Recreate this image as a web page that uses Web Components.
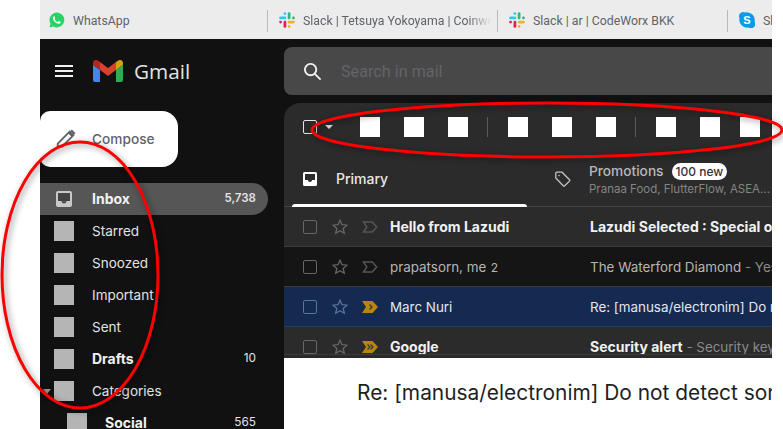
<!DOCTYPE html>
<html><head><meta charset="utf-8"><title>Gmail</title>
<style>
html,body{margin:0;padding:0;background:#fff;height:429px;overflow:hidden}
body{font-family:Inter,"Liberation Sans",sans-serif}
</style></head><body>
<app-shell>
  <tab-bar>
    <browser-tab pad="9" w="228" icon="whatsapp">WhatsApp</browser-tab>
    <browser-tab pad="11" w="230" icon="slack" fade>Slack | Tetsuya Yokoyama | Coinweb</browser-tab>
    <browser-tab pad="11" w="230" icon="slack">Slack | ar | CodeWorx BKK</browser-tab>
    <browser-tab pad="11" w="230" icon="skype">Skype</browser-tab>
  </tab-bar>
  <gmail-view>
    <gmail-sidebar slot="side">
      <nav-item active bold count="5,738" icon="inbox">Inbox</nav-item>
      <nav-item>Starred</nav-item>
      <nav-item>Snoozed</nav-item>
      <nav-item>Important</nav-item>
      <nav-item>Sent</nav-item>
      <nav-item bold count="10">Drafts</nav-item>
      <nav-item caret>Categories</nav-item>
      <nav-item sub bold count="565">Social</nav-item>
    </gmail-sidebar>
    <search-bar slot="search"></search-bar>
    <mail-panel slot="panel">
      <mail-row tone="read" bold name="Hello from Lazudi" subject="Lazudi Selected : Special offer"></mail-row>
      <mail-row tone="dark" name="prapatsorn, me" n="2" subject="The Waterford Diamond" snippet=" - Yes"></mail-row>
      <mail-row tone="blue" imp="1" name="Marc Nuri" subject="Re: [manusa/electronim] Do not detect sor"></mail-row>
      <mail-row tone="read" imp="2" bold name="Google" subject="Security alert" snippet=" - Security key"></mail-row>
    </mail-panel>
    <reading-pane slot="pane">Re: [manusa/electronim] Do not detect sorting</reading-pane>
  </gmail-view>
  <red-marks></red-marks>
</app-shell>
<script>
const def=(n,html)=>{customElements.define(n,class extends HTMLElement{
  connectedCallback(){ if(this.shadowRoot) return; const s=this.attachShadow({mode:'open'}); s.innerHTML=typeof html==='function'?html(this):html; }
});};
const ICONS={
 whatsapp:`<svg width="16" height="16" viewBox="0 0 16 16"><path d="M.4 15.6l1.1-3.900A7.400 7.400 0 1 1 4.400 14.500z" fill="#25d366"/><path d="M5.600 4.100c-.3 0-.7.100-1 .5-.4.500-.8 1.100-.7 2 .2 1.200 1 2.500 2.100 3.500 1.100 1 2.300 1.600 3.500 1.700 1 0 1.700-.5 2-1.100.2-.4.200-.8.100-.9l-1.700-.8c-.2-.1-.3 0-.4.100l-.7.8c-.1.100-.2.100-.4 0-.6-.3-1.200-.6-1.700-1.100-.5-.5-.8-1-1.100-1.500-.1-.2 0-.3.100-.4l.5-.6c.1-.2.100-.3 0-.4l-.7-1.700c-.1-.1-.2-.1-.3-.1z" fill="#fff"/></svg>`,
 slack:`<svg width="16" height="16" viewBox="0 0 16 16"><g fill="none" stroke-linecap="round" stroke-width="2.700"><path d="M1.500 5.900h4.500" stroke="#36c5f0"/><path d="M5.900 1.500v.1" stroke="#36c5f0"/><path d="M10.100 1.500V6" stroke="#2eb67d"/><path d="M14.500 5.900h-.1" stroke="#2eb67d"/><path d="M14.500 10.100H10" stroke="#ecb22e"/><path d="M10.100 14.500v-.1" stroke="#ecb22e"/><path d="M5.900 14.500V10" stroke="#e01e5a"/><path d="M1.500 10.100h.1" stroke="#e01e5a"/></g></svg>`,
 skype:`<svg width="16" height="16" viewBox="0 0 16 16"><path d="M4.300 0A4.300 4.300 0 0 0 .5 6.300 7.800 7.800 0 0 0 9.600 15.500 4.300 4.300 0 0 0 15.600 9.600 7.800 7.800 0 0 0 6.300.5 4.300 4.300 0 0 0 4.300 0z" fill="#0a9ce6"/><text x="8" y="12" text-anchor="middle" font-family="Liberation Sans" font-weight="700" font-size="11" fill="#fff">S</text></svg>`
};
def('app-shell',`<style>:host{display:block;position:relative;width:783px;height:429px;overflow:hidden;background:#fff}
.col{margin-left:40px;width:732px;height:429px;display:flex;flex-direction:column;overflow:hidden}
</style><div class="col"><slot></slot></div><slot name="over"></slot>`);
def('tab-bar',`<style>:host{display:flex;flex:none;height:39px;background:#ececec;overflow:hidden}</style><slot></slot>`);
def('browser-tab',h=>{const fade=h.hasAttribute('fade');return `<style>
:host{display:flex;flex:none;align-items:center;box-sizing:border-box;width:${h.getAttribute('w')}px;padding-left:${h.getAttribute('pad')}px;height:39px;position:relative;font:12.300px Roboto,sans-serif;color:#5f6368}
.i{flex:none;width:16px;height:16px;margin-right:8px;display:block}
.t{white-space:nowrap;overflow:hidden;padding-top:2px;width:${fade?188:190}px;${fade?'-webkit-mask-image:linear-gradient(90deg,#000 88%,transparent 100%);mask-image:linear-gradient(90deg,#000 88%,transparent 100%);':''}}
.d{position:absolute;right:0;top:10px;width:1px;height:22px;background:#b9b9b9}
:host(:last-child) .d{display:none}
</style><span class="i">${ICONS[h.getAttribute('icon')]}</span><span class="t"><slot></slot></span><span class="d"></span>`});
def('gmail-view',`<style>:host{flex:1;display:grid;grid-template-columns:244px 488px;grid-template-rows:8px 48px 8px 255px 1fr;background:#111;min-height:0}
.s{grid-column:1;grid-row:1/6;min-height:0;overflow:hidden}
.a{grid-column:2;grid-row:2;display:block}.b{grid-column:2;grid-row:4;display:block;min-height:0}
.c{grid-column:2;grid-row:5;display:block;min-height:0;overflow:hidden}
</style><div class="s"><slot name="side"></slot></div><div class="a"><slot name="search"></slot></div><div class="b"><slot name="panel"></slot></div><div class="c"><slot name="pane"></slot></div>`);
def('gmail-sidebar',`<style>:host{display:block;height:100%;color:#e8eaed}
.top{display:flex;align-items:center;height:64px;padding-left:15px;box-sizing:border-box}
.word{font:400 20.700px "Open Sans",sans-serif;color:#e3e3e3;margin-left:11px}
.compose{display:flex;align-items:center;box-sizing:border-box;width:138px;height:56px;margin-top:8px;background:#fff;border-radius:10px 16px 16px 10px;padding-left:15px;color:#5f6368;font:500 13.700px Inter,sans-serif}
.compose svg{margin-right:15px;flex:none}
.list{margin-top:16px;display:flex;flex-direction:column}
</style>
<div class="top"><svg width="18" height="12" viewBox="0 0 18 12" fill="#f1f1f1" style="margin-right:20px"><rect y="0" width="18" height="2"/><rect y="5" width="18" height="2"/><rect y="10" width="18" height="2"/></svg>
<svg width="30" height="22" viewBox="0 0 30 22"><path d="M2 22h5V10L0 4.700V20a2 2 0 0 0 2 2z" fill="#4285f4"/><path d="M23 22h5a2 2 0 0 0 2-2V4.700L23 10z" fill="#34a853"/><path d="M23 2v8l7-5.300V3c0-2.700-3-3.900-5-2.300z" fill="#d4a40f"/><path d="M7 10V2l8 6 8-6v8l-8 6z" fill="#d8412f"/><path d="M0 3v1.700L7 10V2L5 .7C3-.9 0 .3 0 3z" fill="#b5271f"/></svg>
<span class="word">Gmail</span></div>
<div class="compose"><svg width="22" height="22" viewBox="0 0 24 24" fill="none" stroke="#5f6368" stroke-width="2"><path d="M3 21v-4L16 4l4 4L7 21M15 5l4 4"/><path d="M17.500 2.500l4 4" stroke-width="2.500"/></svg><span>Compose</span></div>
<div class="list"><slot></slot></div>`);
def('nav-item',h=>{const sub=h.hasAttribute('sub'),b=h.hasAttribute('bold'),act=h.hasAttribute('active'),c=h.getAttribute('count');
 const ic=h.getAttribute('icon')==='inbox'?`<svg class="i" style="left:16px;top:8px;width:16px;height:16px;background:none" viewBox="0 0 16 16"><path d="M2 0h12a2 2 0 0 1 2 2v12a2 2 0 0 1-2 2H2a2 2 0 0 1-2-2V2a2 2 0 0 1 2-2zm0 2v8h3.500a2.500 2.500 0 0 0 5 0H14V2z" fill="#c9c9c9" fill-rule="evenodd"/><rect x="2" y="2" width="12" height="8" fill="#444"/></svg>`:`<span class="i"></span>`;
 return `<style>:host{display:flex;align-items:center;position:relative;height:32px;width:228px;box-sizing:border-box;padding-left:${sub?65:52}px;padding-right:12px;border-radius:0 16px 16px 0;font:${b?700:400} ${b?14:13.500}px Inter,sans-serif;color:${b?'#f1f1f1':'#e3e3e3'};${act?'background:#565656;':''}}
.i{position:absolute;left:${sub?27:14}px;top:6px;width:20px;height:20px;background:#b5b5b5;display:block}
.l{padding-bottom:${b?2:0}px}
.c{margin-left:auto;padding-bottom:2px;font:${act?600:400} ${act?11.500:11.800}px Inter,sans-serif;color:#e3e3e3}
.car{position:absolute;left:3px;top:14px;border:4px solid transparent;border-top:5px solid #999;border-bottom:0}
</style>${ic}${h.hasAttribute('caret')?'<span class="car"></span>':''}<span class="l"><slot></slot></span>${c?`<span class="c">${c}</span>`:''}`});
def('search-bar',`<style>:host{display:flex;align-items:center;height:48px;background:#484848;border-radius:8px 0 0 8px;color:#626468;font:400 16.200px Roboto,sans-serif}
svg{margin:0 19px 0 19px}</style><svg width="19" height="19" viewBox="0 0 20 20" fill="none" stroke="#f1f1f1" stroke-width="2"><circle cx="8" cy="8" r="6"/><path d="M12.500 12.500l6 6"/></svg><span>Search in mail</span>`);
def('mail-panel',`<style>:host{display:flex;flex-direction:column;height:255px;background:#2b2b2b;border-radius:16px 0 0 0;overflow:hidden;color:#e8eaed}
.bar{display:flex;align-items:center;flex:none;height:54px;padding:0 0 6px 19px;box-sizing:border-box}
.cb{width:14px;height:14px;border:1.500px solid #e3e3e3;border-radius:2px;box-sizing:border-box;flex:none}
.cr{width:0;height:0;border-style:solid;border-width:4px 4px 0 4px;border-color:#e3e3e3 transparent transparent;margin:0 27px 0 8px;flex:none}
.sq{width:20px;height:20px;background:#fff;flex:none;margin-right:24px}
.sq.e{margin-right:19px}
.sq.n{margin-right:20px}
.dv{width:1px;height:20px;background:#5a5a5a;flex:none;margin-right:20px}
.tabs{display:flex;flex:none;height:49px;border-bottom:1px solid #444;position:relative}
.p{flex:none;width:243px;display:flex;align-items:center;box-sizing:border-box;padding:0 0 5px 19px;position:relative;font:500 14px Inter,sans-serif;color:#e8e8e8}
.p svg{margin-right:19px}
.p span{padding-bottom:2px}
.p:after{content:"";position:absolute;left:8px;width:235px;bottom:-1px;height:3px;background:#fff;border-radius:3px 3px 0 0}
.q{flex:none;display:flex;align-items:center;padding:0 0 5px 28px;position:relative}
.q svg{margin-right:18px;flex:none}
.l1{display:flex;align-items:center;font:500 13.700px Inter,sans-serif;color:#b9b9b9;height:18px}
.pill{background:#fff;color:#333;font:500 12px Inter,sans-serif;border-radius:9px;height:17px;line-height:17px;padding:0 4px;margin-left:8px}
.l2{font:400 11.500px Inter,sans-serif;color:#858585;white-space:nowrap;margin-top:2px}
.rows{flex:none;height:147px;overflow:hidden}
.foot{flex:1;border-top:1px solid #3c3c3c;background:#2a2a2a}
</style>
<div class="bar"><span class="cb"></span><span class="cr"></span><span class="sq"></span><span class="sq"></span><span class="sq e"></span><span class="dv"></span><span class="sq"></span><span class="sq"></span><span class="sq e"></span><span class="dv"></span><span class="sq"></span><span class="sq n"></span><span class="sq"></span></div>
<div class="tabs"><div class="p"><svg width="14" height="14" viewBox="0 0 14 14"><path d="M1.500 0h11A1.500 1.500 0 0 1 14 1.500v11a1.500 1.500 0 0 1-1.500 1.500h-11A1.500 1.500 0 0 1 0 12.500v-11A1.500 1.500 0 0 1 1.500 0zM2 2v6h3a2 2 0 0 0 4 0h3V2z" fill="#fff" fill-rule="evenodd"/></svg><span>Primary</span></div>
<div class="q"><svg width="16" height="16" viewBox="0 0 16 16" fill="none" stroke="#c4c4c4" stroke-width="1.300"><path d="M.8 2.300V7l7.400 7.800a1 1 0 0 0 1.400 0l4.900-4.700a1 1 0 0 0 0-1.400L7 1.200H1.900a1 1 0 0 0-1.100 1.100z"/><circle cx="4" cy="4.500" r=".8" fill="#c4c4c4" stroke="none"/></svg><div><div class="l1">Promotions<span class="pill">100 new</span></div><div class="l2">Pranaa Food, FlutterFlow, ASEA...</div></div></div></div>
<div class="rows"><slot></slot></div><div class="foot"></div>`);
def('mail-row',h=>{const tone=h.getAttribute('tone'),imp=h.getAttribute('imp'),b=h.hasAttribute('bold'),g=k=>h.getAttribute(k)||'';
 const bg={read:'#2b2b2b',dark:'#151515',blue:'#142a50'}[tone];
 const sc=tone==='blue'?'#5a7399':'#666';
 const impi=imp?`<svg width="16" height="12" viewBox="0 0 16 12"><path d="M0 0h10.500L16 6l-5.500 6H0l4-6z" fill="#b8860f"/>${imp==='1'?'<path d="M7.500 3.500L10 6l-2.500 2.500" fill="none" stroke="#333" stroke-width="1.200"/>':'<path d="M5.500 3.500L8 6l-2.500 2.500M8.500 3.500L11 6l-2.500 2.500" fill="none" stroke="#333" stroke-width="1.200"/>'}</svg>`:`<svg width="16" height="12" viewBox="0 0 16 12"><path d="M1.500 1h8.700L14.800 6l-4.600 5H1.500L4.800 6z" fill="none" stroke="#555" stroke-width="1.500"/></svg>`;
 return `<style>:host{display:flex;align-items:center;height:40px;box-sizing:border-box;background:${bg};border-bottom:1px solid ${tone==='blue'?'#2a3d5e':'#3c3c3c'};padding-left:19px;white-space:nowrap;font:${b?700:400} ${b?14:13.400}px Inter,sans-serif;color:${b?'#f1f1f1':(tone==='blue'?'#e3e8f0':'#b5b5b5')};flex:none;overflow:hidden}
.cb{width:14px;height:14px;border:1.500px solid ${sc};border-radius:2px;box-sizing:border-box;flex:none;margin-right:15px}
.st{flex:none;margin-right:14px;display:block}.im{flex:none;margin-right:12px;display:flex}
.nm{width:200px;flex:none}.n{font-size:12px;font-weight:400;margin-left:1px}
.sub{flex:none}.sub b{font-weight:${b?700:400}}.sn{color:#8a8a8a;font-weight:400;font-size:13.400px}
</style><span class="cb"></span><svg class="st" width="16" height="16" viewBox="0 0 16 16"><path d="M8 1.200l2 4.500 4.900.5-3.700 3.300 1.100 4.800L8 11.800l-4.300 2.500 1.100-4.800L1.100 6.200 6 5.700z" fill="none" stroke="${sc}" stroke-width="1.300"/></svg><span class="im">${impi}</span><span class="nm">${g('name')}${g('n')?`<span class="n"> ${g('n')}</span>`:''}</span><span class="sub"><b>${g('subject')}</b><span class="sn">${g('snippet')}</span></span>`});
def('reading-pane',`<style>:host{display:block;height:100%;background:#fff;box-sizing:border-box;padding:22px 0 0 73px;font:400 20.900px/26px Inter,Roboto,sans-serif;color:#1f1f1f;white-space:nowrap;overflow:hidden}</style><slot></slot>`);
def('red-marks',`<style>:host{position:absolute;left:0;top:0;width:783px;height:429px;pointer-events:none;display:block}
svg{display:block;filter:drop-shadow(2px 2px 3px rgba(0,0,0,.45))}</style><svg width="783" height="429" viewBox="0 0 783 429" fill="none" stroke="#f00" stroke-width="3"><ellipse cx="80" cy="275" rx="78" ry="133"/><ellipse cx="547" cy="130" rx="235" ry="27"/></svg>`);
</script></body></html>
